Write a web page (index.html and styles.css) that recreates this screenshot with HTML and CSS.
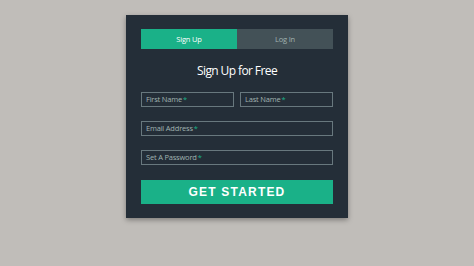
FILE: index.html
```html
<!DOCTYPE html>
<html>
<head>
<meta charset="utf-8">
<link rel="stylesheet" href="styles.css">
</head>
<body>
<div class="form">
  <div class="tabs">
    <div class="tab active">Sign Up</div>
    <div class="tab">Log In</div>
  </div>
  <h1 class="title">Sign Up for Free</h1>
  <div class="row two">
    <div class="field">First Name<span class="req">*</span></div>
    <div class="field">Last Name<span class="req">*</span></div>
  </div>
  <div class="row">
    <div class="field">Email Address<span class="req">*</span></div>
  </div>
  <div class="row">
    <div class="field">Set A Password<span class="req">*</span></div>
  </div>
  <div class="button">GET STARTED</div>
</div>
</body>
</html>
```
FILE: styles.css
```css
html, body {
  margin: 0;
  padding: 0;
  background: #c0bdb9;
  width: 474px;
  height: 266px;
  overflow: hidden;
}
.form {
  position: relative;
  margin: 15px 0 0 126px;
  width: 222px;
  height: 203px;
  box-sizing: border-box;
  padding: 14px 15px 14px 15px;
  background: #242e38;
  box-shadow: 0 2px 5px rgba(0,0,0,0.35);
  font-family: "Open Sans", "Noto Sans", sans-serif;
  display: flex;
  flex-direction: column;
}
.tabs {
  display: flex;
  height: 20px;
}
.tab {
  flex: 1;
  display: flex;
  align-items: center;
  justify-content: center;
  font-size: 7.5px;
  color: #a0b3b0;
  background: #435157;
  letter-spacing: -0.2px;
}
.tab.active {
  background: #1ab188;
  color: #ffffff;
}
.title {
  margin: 15px 0 14px 0;
  height: 14px;
  line-height: 14px;
  text-align: center;
  font-weight: 400;
  font-size: 12px;
  color: #ffffff;
  letter-spacing: -0.6px;
}
.row {
  display: flex;
  gap: 6px;
  margin-bottom: 14px;
}
.field {
  flex: 1;
  height: 15px;
  box-sizing: border-box;
  border: 1px solid #68787e;
  display: flex;
  align-items: center;
  padding-left: 4px;
  font-size: 7.5px;
  color: #a0b3b0;
  letter-spacing: -0.2px;
}
.req {
  color: #1ab188;
  margin-left: 1px;
}
.button {
  margin-top: 1px;
  height: 25px;
  background: #1ab188;
  color: #ffffff;
  display: flex;
  align-items: center;
  justify-content: center;
  font-family: "Liberation Sans", Arial, sans-serif;
  font-weight: 700;
  font-size: 12px;
  letter-spacing: 1.2px;
}
```
